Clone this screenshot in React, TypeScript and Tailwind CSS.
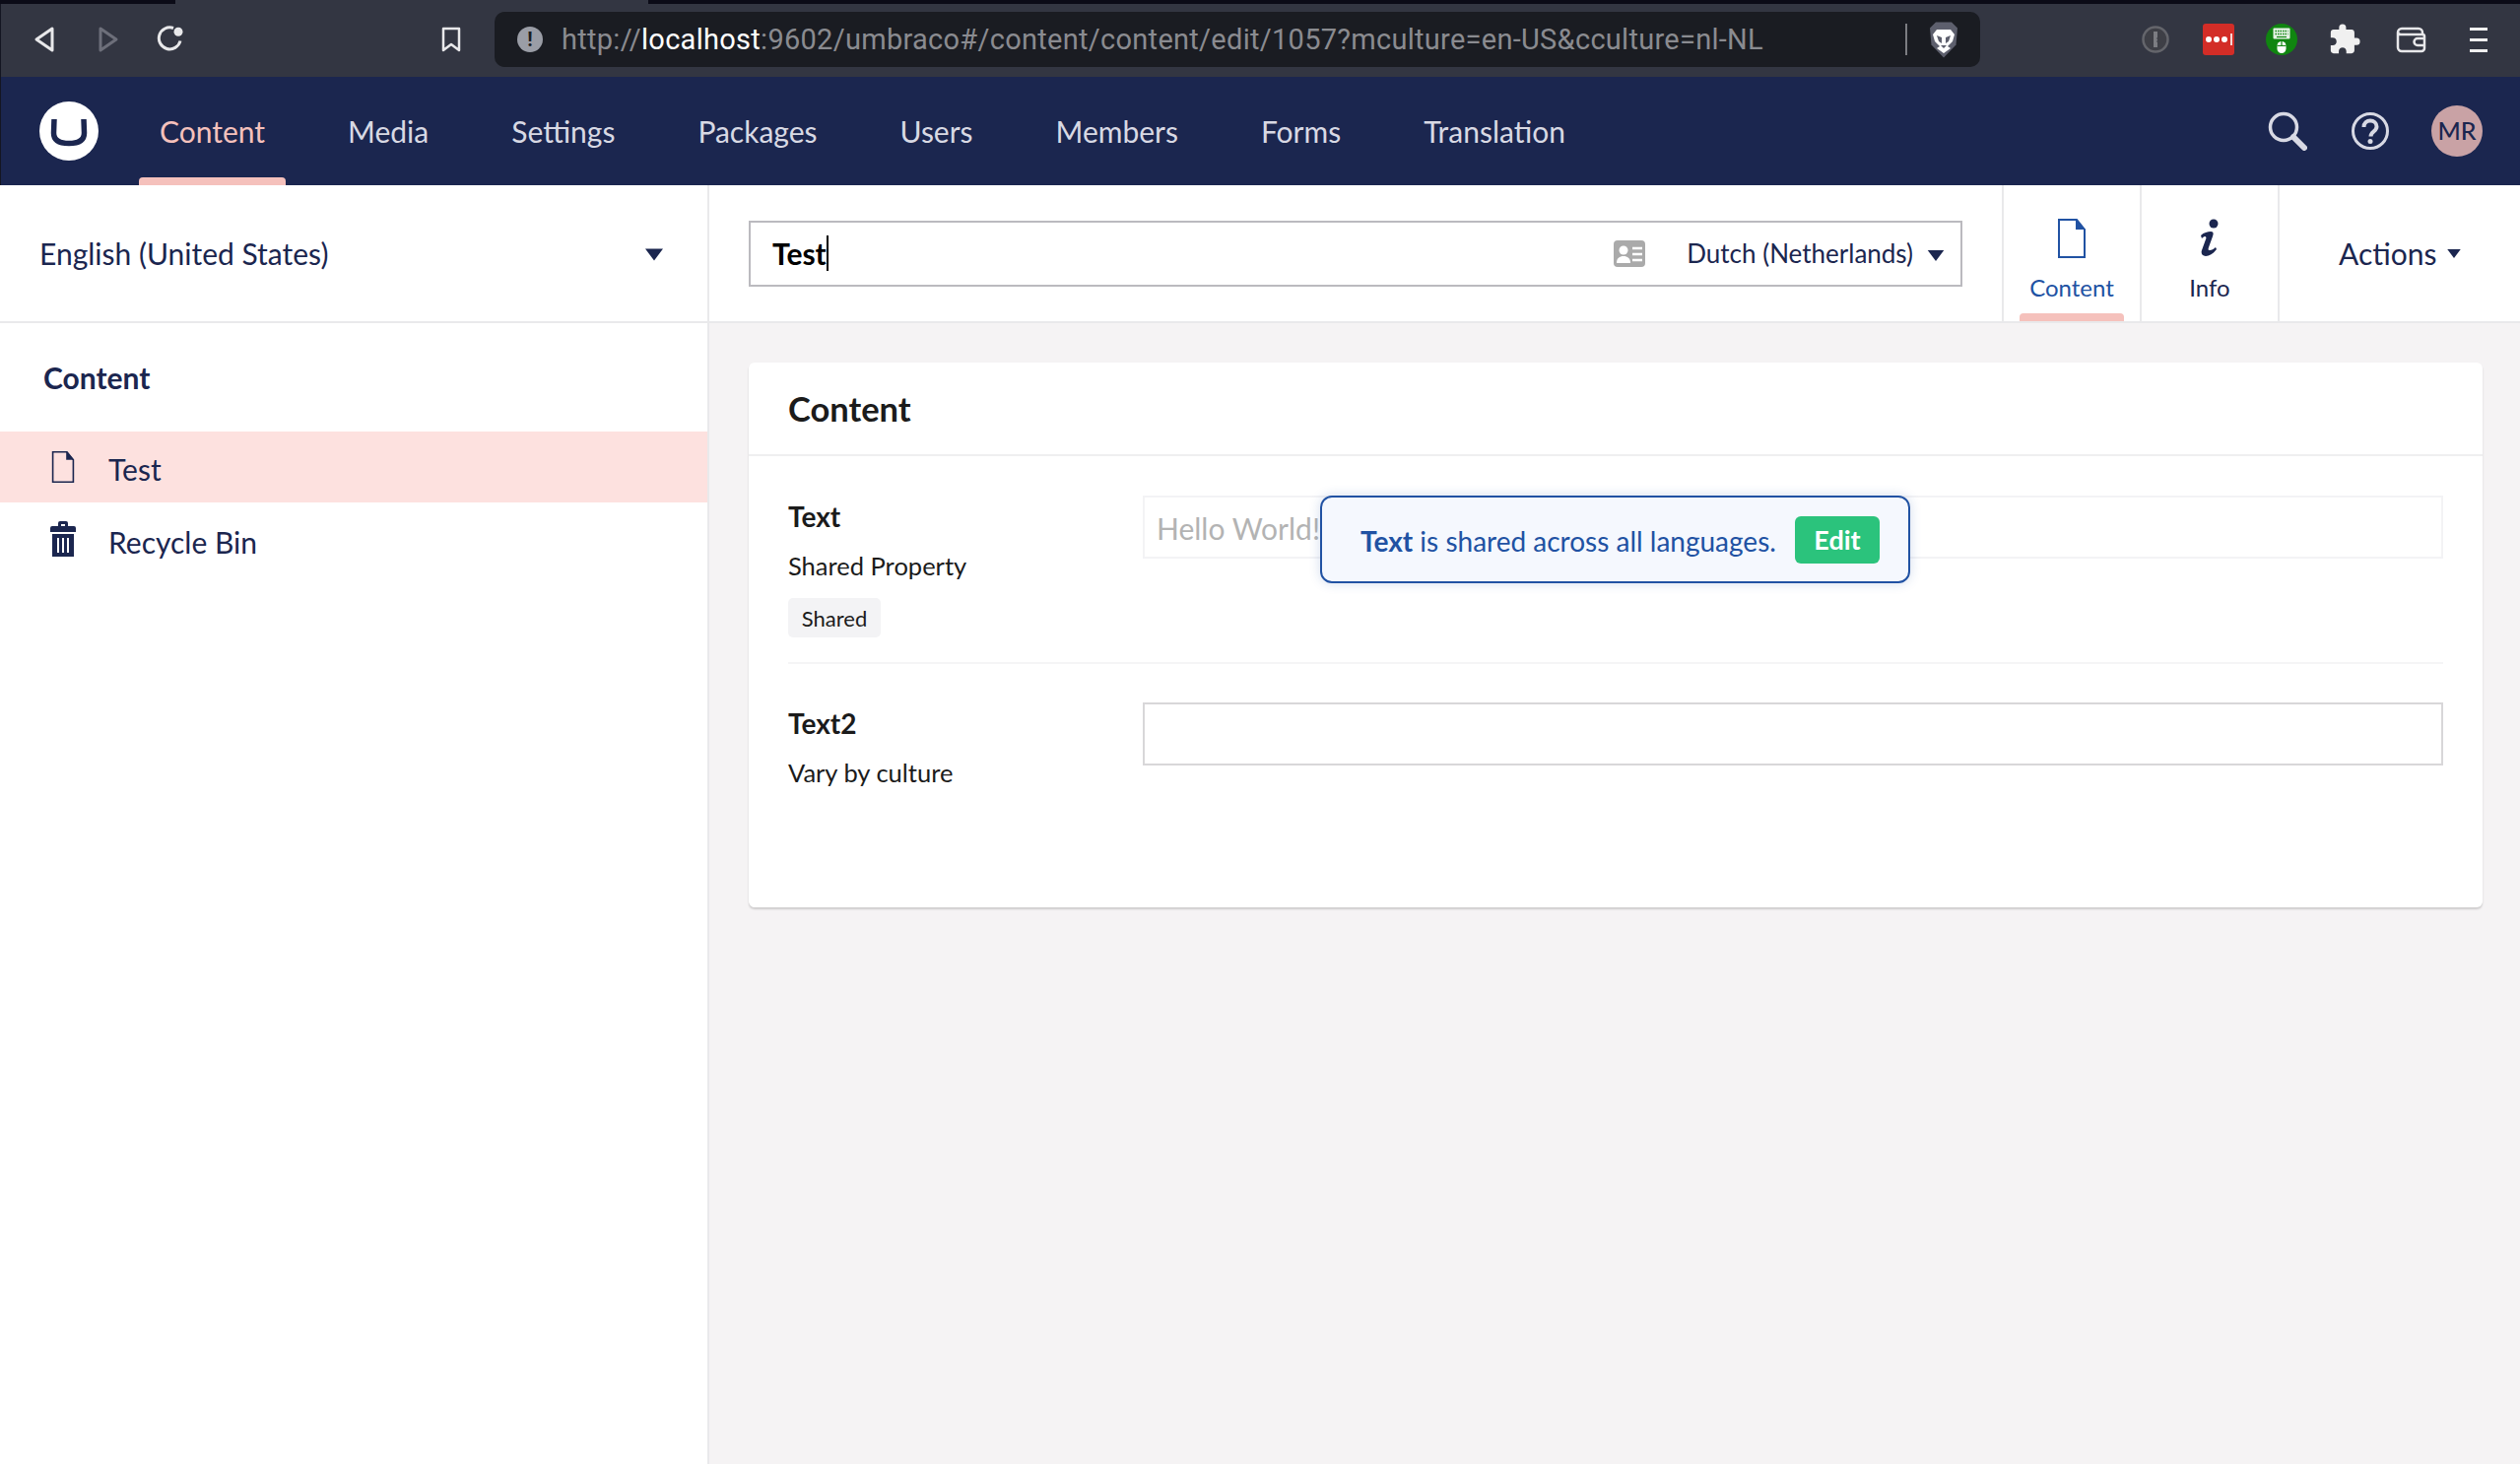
import { MdExtension } from "react-icons/md";

const navItems = ["Content", "Media", "Settings", "Packages", "Users", "Members", "Forms", "Translation"];

const Caret = ({ className }: { className: string }) => (
  <svg className={className} viewBox="0 0 18 12" fill="currentColor">
    <path d="M0 0h18L9 12z" />
  </svg>
);

const FileIcon = ({ className }: { className: string }) => (
  <svg className={className} viewBox="0 0 28 40" fill="none">
    <path d="M1 1h18l8 10v28H1z" stroke="currentColor" strokeWidth="2" />
    <path d="M18 0l10 11H18z" fill="currentColor" />
  </svg>
);

const Browser = () => {
  return (
    <div className="bg-[#333642] shadow-[inset_1px_0_0_#141622]">
      <div className="flex h-[4px] bg-[#0b0b17]">
        <div className="w-[178px]" />
        <div className="w-[480px] bg-[#333642]" />
      </div>
      <div className="flex h-[74px] items-center pb-[2px]">
        <svg className="ml-[35px] h-[26px] w-[20px] text-[#e8e8ea]" viewBox="0 0 20 26" fill="none" stroke="currentColor" strokeWidth="3" strokeLinejoin="round">
          <path d="M18 2v22L2 13z" />
        </svg>
        <svg className="ml-[45px] h-[26px] w-[20px] text-[#6d6f7a]" viewBox="0 0 20 26" fill="none" stroke="currentColor" strokeWidth="3" strokeLinejoin="round">
          <path d="M2 2v22l16-11z" />
        </svg>
        <svg className="ml-[39px] h-[28px] w-[28px] text-[#e8e8ea]" viewBox="0 0 28 28" fill="none" stroke="currentColor" strokeWidth="3">
          <path d="M17 2.500A11 11 0 1 0 24 15.500" />
          <circle cx="22" cy="6.300" r="4.500" fill="currentColor" stroke="none" />
        </svg>
        <svg className="ml-[261px] h-[26px] w-[20px] text-[#e8e8ea]" viewBox="0 0 20 26" fill="none" stroke="currentColor" strokeWidth="2.500" strokeLinejoin="round">
          <path d="M2 2h16v22l-8-6-8 6z" />
        </svg>
        <div className="ml-[34px] flex h-[56px] w-[1508px] items-center rounded-[10px] bg-[#1a1c22] pl-[23px] pr-[22px]">
          <div className="flex h-[26px] w-[26px] items-center justify-center rounded-full bg-[#9a9da6] text-[20px] font-bold leading-none text-[#1a1c22] [font-family:Roboto,sans-serif]">!</div>
          <div className="ml-[19px] mt-[2px] flex-1 whitespace-nowrap text-[29px] tracking-[0.28px] text-[#8a8b90] [font-family:Roboto,sans-serif]">
            http://<span className="text-white">localhost</span>:9602/umbraco#/content/content/edit/1057?mculture=en-US&amp;cculture=nl-NL
          </div>
          <div className="h-[32px] w-[2px] bg-[#7c7d82]" />
          <svg className="ml-[22px] h-[37px] w-[30px]" viewBox="0 0 30 37">
            <path d="M7 .5h16l6 6-1.500 17L15 36.500 2.500 23.500 1 6.500z" fill="#5d5f6d" />
            <path d="M4 13l4-5h14l4 5-2 7-3 3-2 2 3 2-7 5-7-5 3-2-2-2-3-3z" fill="#fff" />
            <path d="M8 14l5 2v6l-3-2zM22 14l-5 2v6l3-2zM12 24h6l-3 3z" fill="#5d5f6d" />
          </svg>
        </div>
        <svg className="ml-[164px] h-[28px] w-[28px]" viewBox="0 0 28 28">
          <circle cx="14" cy="14" r="12.500" fill="#3e3f46" stroke="#64656b" strokeWidth="2.500" />
          <path d="M12 6h4v6l-1 1 1 1v1l-1 1 1 1v5h-4z" fill="#7c7d82" />
        </svg>
        <div className="ml-[34px] flex h-[32px] w-[32px] items-center justify-center gap-[2px] rounded-[3px] bg-[#d32d27]">
          <span className="h-[6px] w-[6px] rounded-full bg-white" />
          <span className="h-[6px] w-[6px] rounded-full bg-white" />
          <span className="h-[6px] w-[6px] rounded-full bg-white" />
          <span className="ml-[1px] h-[12px] w-[2px] bg-[#f6d5d3]" />
        </div>
        <svg className="ml-[32px] h-[32px] w-[32px]" viewBox="0 0 32 32">
          <circle cx="16" cy="16" r="16" fill="#108510" />
          <rect x="7.500" y="4.500" width="17" height="11" rx="1" fill="#e6f2e6" />
          <path d="M9.500 7.500h13M9.500 10.500h13" stroke="#108510" strokeWidth="1.400" strokeDasharray="1.500 1" />
          <path d="M11 13.500h10" stroke="#108510" strokeWidth="1.200" />
          <rect x="11.500" y="18" width="9" height="12" rx="4.500" fill="#fff" />
          <path d="M16 18v4M11.500 22.500h9" stroke="#108510" strokeWidth="1.200" />
        </svg>
        <MdExtension className="ml-[31px] text-[#f0f0f0]" size={34} />
        <svg className="ml-[35px] h-[27px] w-[31px] text-[#e8e8ea]" viewBox="0 0 31 27" fill="none" stroke="currentColor" strokeWidth="2.500">
          <path d="M2 6a4 4 0 0 1 4-4h17a4 4 0 0 1 4 4v2" />
          <path d="M2 6v15a4 4 0 0 0 4 4h20a3 3 0 0 0 3-3V10a2 2 0 0 0-2-2H6a4 4 0 0 1-4-2" />
          <path d="M29 12h-7a3.500 3.500 0 0 0 0 7h7" />
        </svg>
        <div className="ml-[44px] flex w-[18px] flex-col gap-[8px]">
          <span className="h-[3px] bg-[#f0f0f0]" />
          <span className="h-[3px] bg-[#f0f0f0]" />
          <span className="h-[3px] bg-[#f0f0f0]" />
        </div>
      </div>
    </div>
  );
};

const TopNav = () => {
  return (
    <div className="flex h-[110px] items-stretch bg-[#1b264f] shadow-[inset_1px_0_0_#141622]">
      <div className="ml-[40px] flex items-center">
        <svg className="h-[60px] w-[60px]" viewBox="0 0 60 60">
          <circle cx="30" cy="30" r="30" fill="#fff" />
          <path d="M15 18l-.5 14Q14.500 42.500 30 42.500T45.500 32L45 18" fill="none" stroke="#1b264f" strokeWidth="5.500" />
        </svg>
      </div>
      <div className="ml-[20px] flex">
        {navItems.map((item, i) => (
          <div
            key={item}
            className={`relative flex items-center px-[42px] pt-[1px] text-[30px] ${i === 0 ? "text-[#f5c1bc]" : "text-[#d8d9e4]"}`}
          >
            {item}
            {i === 0 && <span className="absolute inset-x-[21px] bottom-0 h-[8px] rounded-t-[4px] bg-[#f5c1bc]" />}
          </div>
        ))}
      </div>
      <div className="ml-auto mr-[38px] flex items-center text-[#d8d9e4]">
        <svg className="h-[40px] w-[40px]" viewBox="0 0 40 40" fill="none" stroke="currentColor">
          <circle cx="16" cy="16" r="13.500" strokeWidth="3.500" />
          <path d="M26 26l11 11" strokeWidth="6" strokeLinecap="round" />
        </svg>
        <svg className="ml-[45px] h-[38px] w-[38px]" viewBox="0 0 38 38" fill="none" stroke="currentColor">
          <circle cx="19" cy="19" r="17.500" strokeWidth="3" />
          <path d="M12.500 15c0-4 3-6.500 6.500-6.500s6.500 2.500 6.500 6c0 5-6 5-6 10" strokeWidth="4" />
          <circle cx="19" cy="29.500" r="2.500" fill="currentColor" stroke="none" />
        </svg>
        <div className="ml-[43px] flex h-[52px] w-[52px] items-center justify-center rounded-full bg-[#c9a2a5] text-[25px] font-medium text-[#1b264f]">MR</div>
      </div>
    </div>
  );
};

const Sidebar = () => {
  return (
    <aside className="flex w-[720px] shrink-0 flex-col border-r-2 border-[#e9e9eb] bg-white">
      <div className="flex h-[140px] shrink-0 items-center border-b-2 border-[#e9e9eb] pl-[40px] pr-[45px] text-[30px]">
        <span>English (United States)</span>
        <Caret className="ml-auto mt-[2px] h-[13px] w-[18px]" />
      </div>
      <div className="pl-[44px] pt-[32px] text-[30px] font-bold leading-[46px]">Content</div>
      <div className="mt-[32px]">
        <div className="flex h-[72px] items-center bg-[#fde1df] pl-[52px] text-[30px]">
          <FileIcon className="mb-[1px] h-[32px] w-[24px]" />
          <span className="ml-[34px] mt-[5px]">Test</span>
        </div>
        <div className="flex h-[76px] items-center pl-[51px] text-[30px]">
          <svg className="mb-[3px] h-[36px] w-[26px]" viewBox="0 0 26 36" fill="currentColor">
            <path d="M8 5V2a2 2 0 0 1 2-2h6a2 2 0 0 1 2 2v3h6a2 2 0 0 1 2 2v4H0V7a2 2 0 0 1 2-2zm3 0h4V3h-4z" />
            <path fillRule="evenodd" d="M2 13h22v23H2zm5 4v15h2V17zm5 0v15h2V17zm5 0v15h2V17z" />
          </svg>
          <span className="ml-[33px] mt-[5px]">Recycle Bin</span>
        </div>
      </div>
    </aside>
  );
};

const SubHeader = () => {
  return (
    <div className="flex h-[140px] shrink-0 border-b-2 border-[#e9e9eb] bg-white">
      <div className="flex flex-1 items-center px-[40px]">
        <div className="flex h-[67px] flex-1 items-center border-2 border-[#bbbabf] pl-[22px] pr-[16px]">
          <span className="text-[30px] font-bold text-black">Test</span>
          <span className="h-[36px] w-[2px] bg-black" />
          <svg className="ml-auto h-[27px] w-[32px] text-[#aaaaaa]" viewBox="0 0 32 27">
            <rect width="32" height="27" rx="4" fill="currentColor" />
            <circle cx="10" cy="10" r="4.500" fill="#fff" />
            <path d="M3 23c0-5 3-7 7-7s7 2 7 7z" fill="#fff" />
            <path d="M19 8h10M19 14h10M19 20h10" stroke="#fff" strokeWidth="2.500" />
          </svg>
          <span className="ml-[42px] text-[26px]">Dutch (Netherlands)</span>
          <Caret className="ml-[14px] mt-[4px] h-[11px] w-[18px]" />
        </div>
      </div>
      <div className="relative flex w-[140px] flex-col items-center border-l-2 border-[#e9e9eb] pt-[34px] text-[#2152a3]">
        <FileIcon className="h-[40px] w-[28px]" />
        <span className="mt-[12px] text-[24px]">Content</span>
        <span className="absolute inset-x-[16px] bottom-0 h-[8px] rounded-t-[4px] bg-[#f5c1bc]" />
      </div>
      <div className="flex w-[140px] flex-col items-center border-l-2 border-[#e9e9eb] pt-[34px]">
        <svg className="h-[40px] w-[20px]" viewBox="0 0 20 40" fill="currentColor">
          <circle cx="14" cy="5" r="4.500" />
          <path d="M1 17c3-3 7-4 10-4 3 0 3 2 2 5l-4 11c-1 3 0 3 1 3 2 0 4-1 6-3l1 2c-3 4-7 7-11 7-4 0-5-3-4-6l4-11c1-2 0-3-1-3-1 0-2 1-3 2z" />
        </svg>
        <span className="mt-[12px] text-[24px]">Info</span>
      </div>
      <div className="flex w-[246px] items-center border-l-2 border-[#e9e9eb] pl-[60px] text-[30px]">
        <span>Actions</span>
        <Caret className="ml-[10px] h-[9px] w-[16px]" />
      </div>
    </div>
  );
};

const Property = ({ label, desc, children, badge }: { label: string; desc: string; children: React.ReactNode; badge?: boolean }) => {
  return (
    <div className="flex">
      <div className="w-[360px] shrink-0 text-[#1b1b1b]">
        <div className="text-[28px] font-bold leading-[42px]">{label}</div>
        <div className="mt-[8px] text-[25.500px] leading-[42px]">{desc}</div>
        {badge && (
          <div className="mb-[25px] mt-[12px] flex h-[40px] w-[94px] items-center justify-center rounded-[5px] bg-[#f3f3f5] text-[22px]">Shared</div>
        )}
      </div>
      <div className="relative flex-1">{children}</div>
    </div>
  );
};

export default function App() {
  return (
    <div className="flex h-screen flex-col overflow-hidden bg-[#f5f3f4] text-[#1b264f] [font-family:Lato,sans-serif]">
      <Browser />
      <TopNav />
      <div className="flex flex-1">
        <Sidebar />
        <main className="flex flex-1 flex-col">
          <SubHeader />
          <div className="pb-[40px] pl-[40px] pr-[38px] pt-[40px]">
            <div className="h-[553px] rounded-[6px] bg-white shadow-[0_2px_2px_rgba(0,0,0,0.16)]">
              <div className="flex h-[95px] items-center border-b-2 border-[#efeff0] pl-[40px] text-[34.500px] font-bold text-[#1b1b1b]">Content</div>
              <div className="px-[40px] pt-[40px]">
                <Property label="Text" desc="Shared Property" badge>
                  <div className="flex h-[64px] items-center border-2 border-[#f3f3f5] pl-[12px] pt-[2px] text-[30px] text-[#b3b3b3]">Hello World!</div>
                  <div className="absolute left-[180px] top-0 flex h-[89px] w-[599px] items-center rounded-[12px] border-2 border-[#2152a3] bg-[#f5f8fe] pl-[39px] shadow-[0_0_12px_rgba(33,82,163,0.2)]">
                    <span className="mt-[2px] text-[28px] text-[#2152a3]">
                      <b>Text</b> is shared across all languages.
                    </span>
                    <span className="absolute left-[480px] top-[19px] flex h-[48px] w-[86px] items-center justify-center rounded-[6px] bg-[#2bc37c] text-[27px] font-bold text-white">Edit</span>
                  </div>
                </Property>
                <div className="mb-[39px] h-[2px] bg-[#f5f5f6]" />
                <Property label="Text2" desc="Vary by culture">
                  <div className="h-[64px] border-2 border-[#d8d7d9]" />
                </Property>
              </div>
            </div>
          </div>
        </main>
      </div>
    </div>
  );
}
